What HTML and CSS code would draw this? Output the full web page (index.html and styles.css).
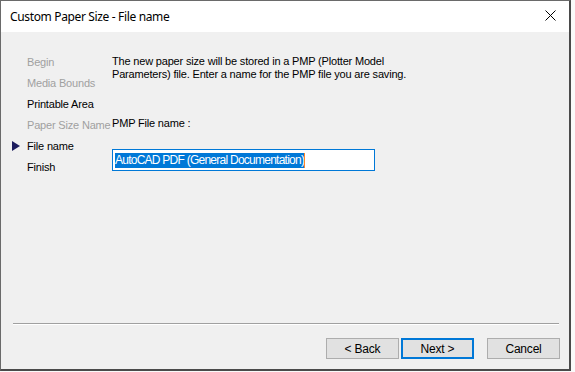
FILE: index.html
```html
<!DOCTYPE html>
<html lang="en">
<head>
  <meta charset="UTF-8" />
  <link rel="stylesheet" href="styles.css">
</head>
<body>
  <div class="dialog">
    <div class="title-bar">
      <span class="title">Custom Paper Size - File name</span>
      <svg class="close-icon" width="11" height="11" viewBox="0 0 11 11" aria-label="Close">
        <path d="M0.5 0.5 L10.5 10.5 M10.5 0.5 L0.5 10.5" stroke="#000" stroke-width="1" fill="none"/>
      </svg>
    </div>
    <div class="dialog-body">
      <div class="main">
        <ul class="steps">
          <li class="step disabled"><span class="marker"></span>Begin</li>
          <li class="step disabled"><span class="marker"></span>Media Bounds</li>
          <li class="step"><span class="marker"></span>Printable Area</li>
          <li class="step disabled"><span class="marker"></span>Paper Size Name</li>
          <li class="step current">
            <span class="marker">
              <svg width="8" height="10" viewBox="0 0 8 10"><polygon points="0,0 8,5 0,10" fill="#1c1c5e"/></svg>
            </span>File name
          </li>
          <li class="step"><span class="marker"></span>Finish</li>
        </ul>
        <div class="panel">
          <p class="intro">The new paper size will be stored in a PMP (Plotter Model<br>Parameters) file. Enter a name for the PMP file you are saving.</p>
          <div class="field-label">PMP File name :</div>
          <div class="text-box"><span class="selected">AutoCAD PDF (General Documentation)</span><span class="caret"></span></div>
        </div>
      </div>
      <div class="footer">
        <div class="separator"></div>
        <div class="buttons">
          <button class="btn">&lt; Back</button>
          <button class="btn default">Next &gt;</button>
          <button class="btn cancel">Cancel</button>
        </div>
      </div>
    </div>
  </div>
</body>
</html>
```

FILE: styles.css
```css
body {
  margin: 0;
  padding: 0;
  background: #fafafa;
  font-family: 'Liberation Sans', Arial, sans-serif;
  font-size: 11px;
  letter-spacing: -0.18px;
  color: #000;
}
.dialog {
  width: 568px;
  height: 368px;
  border: 1px solid #6a6a6a;
  border-right: 2px solid #4a4a4a;
  border-bottom: 2px solid #4a4a4a;
  display: flex;
  flex-direction: column;
  background: #f0f0f0;
}
.title-bar {
  height: 31px;
  background: #fff;
  display: flex;
  align-items: center;
  justify-content: space-between;
  padding: 0 13px 0 9px;
}
.title {
  font-family: 'Noto Sans', sans-serif;
  font-size: 12px;
  letter-spacing: -0.35px;
  color: #000;
  margin-top: -1px;
}
.close-icon {
  display: block;
  margin-top: -2px;
}
.dialog-body {
  flex: 1;
  display: flex;
  flex-direction: column;
}
.main {
  flex: 1;
  display: flex;
  padding-left: 11px;
}
.steps {
  list-style: none;
  margin: 0;
  padding: 19px 0 0 0;
  width: 100px;
}
.step {
  display: flex;
  align-items: center;
  height: 21px;
  white-space: nowrap;
}
.step.disabled {
  color: #a0a0a0;
}
.marker {
  width: 15px;
  flex: none;
  display: flex;
  align-items: center;
}
.marker svg {
  display: block;
}
.panel {
  padding-top: 23px;
}
.intro {
  margin: 0;
  line-height: 13px;
  white-space: nowrap;
}
.field-label {
  margin-top: 36px;
  line-height: 13px;
}
.text-box {
  margin-top: 19px;
  width: 259px;
  height: 20px;
  border: 1px solid #0078d7;
  background: #fff;
  display: flex;
  align-items: center;
  padding-left: 2px;
}
.selected {
  background: #0078d7;
  color: #fff;
  line-height: 15px;
  font-size: 12px;
  letter-spacing: -0.75px;
}
.caret {
  width: 1px;
  height: 15px;
  background: #ff8728;
}
.footer {
  padding: 0 9px 10px 12px;
}
.separator {
  height: 1px;
  background: #a0a0a0;
  border-bottom: 1px solid #fff;
  margin-right: 1px;
}
.buttons {
  display: flex;
  justify-content: flex-end;
  margin-top: 13px;
}
.btn {
  width: 73px;
  height: 21px;
  margin: 0;
  padding: 0;
  background: #e1e1e1;
  border: 1px solid #adadad;
  font-family: 'Liberation Sans', Arial, sans-serif;
  font-size: 12px;
  letter-spacing: -0.2px;
  color: #000;
}
.btn.default {
  border: 2px solid #0078d7;
  margin-left: 2px;
}
.btn.cancel {
  margin-left: 13px;
}
```
